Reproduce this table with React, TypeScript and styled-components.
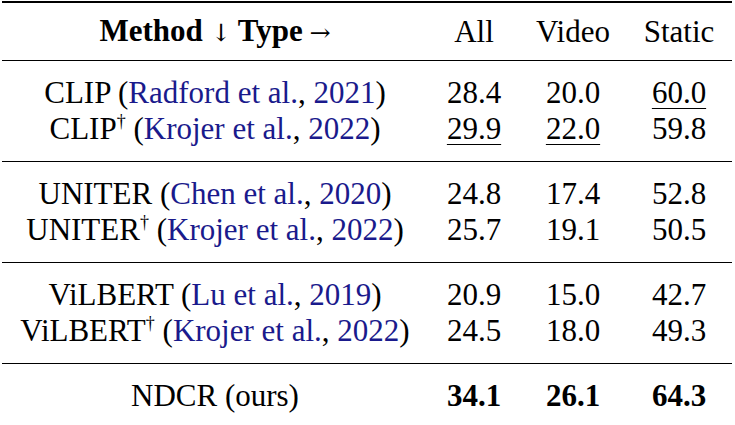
import React from 'react';
import styled, { createGlobalStyle } from 'styled-components';

const GlobalStyle = createGlobalStyle`
  html, body {
    margin: 0;
    padding: 0;
    background: #fff;
  }
`;

const Page = styled.div`
  width: 735px;
  height: 425px;
  padding: 1px 3px 0 2px;
  box-sizing: border-box;
`;

const Table = styled.table`
  width: 730px;
  border-collapse: collapse;
  font-family: 'Liberation Serif', 'Times New Roman', serif;
  font-size: 31px;
  color: #000;
  border-top: 2.5px solid #000;
  border-bottom: 2.5px solid #000;
`;

const Head = styled.thead`
  border-bottom: 1.5px solid #000;
`;

const Group = styled.tbody`
  border-top: 1.5px solid #000;

  tr:first-child td {
    padding-top: 14px;
  }
  tr:last-child td {
    padding-bottom: 14px;
  }
`;

const HeadCell = styled.th<{ $bold?: boolean }>`
  font-weight: ${(p) => (p.$bold ? 700 : 400)};
  text-align: center;
  height: 57px;
  padding: 0;
  line-height: 36px;
  white-space: nowrap;
`;

const Arrow = styled.span`
  font-weight: 400;
  font-family: 'DejaVu Serif', 'Liberation Serif', serif;
  font-size: 24px;
  display: inline-block;
  transform: scaleX(1.05);
`;

const Cell = styled.td<{ $bold?: boolean }>`
  font-weight: ${(p) => (p.$bold ? 700 : 400)};
  text-align: center;
  padding: 0;
  line-height: 36px;
  white-space: nowrap;
`;

const Cite = styled.span`
  color: #1a1a8c;
`;

const Dagger = styled.sup`
  font-size: 18px;
  vertical-align: 12px;
  line-height: 0;
`;

const Best2 = styled.span`
  text-decoration: underline;
  text-decoration-thickness: 1px;
  text-underline-offset: 5px;
`;

type Row = {
  name: string;
  dagger?: boolean;
  authors: string;
  year: string;
  scores: [string, string, string];
  second?: number[];
};

const groups: Row[][] = [
  [
    { name: 'CLIP', authors: 'Radford et al.', year: '2021', scores: ['28.4', '20.0', '60.0'], second: [2] },
    { name: 'CLIP', dagger: true, authors: 'Krojer et al.', year: '2022', scores: ['29.9', '22.0', '59.8'], second: [0, 1] },
  ],
  [
    { name: 'UNITER', authors: 'Chen et al.', year: '2020', scores: ['24.8', '17.4', '52.8'] },
    { name: 'UNITER', dagger: true, authors: 'Krojer et al.', year: '2022', scores: ['25.7', '19.1', '50.5'] },
  ],
  [
    { name: 'ViLBERT', authors: 'Lu et al.', year: '2019', scores: ['20.9', '15.0', '42.7'] },
    { name: 'ViLBERT', dagger: true, authors: 'Krojer et al.', year: '2022', scores: ['24.5', '18.0', '49.3'] },
  ],
];

const ours = ['34.1', '26.1', '64.3'];

export default function App() {
  return (
    <>
      <GlobalStyle />
      <Page>
        <Table>
          <colgroup>
            <col style={{ width: 426 }} />
            <col style={{ width: 92 }} />
            <col style={{ width: 106 }} />
            <col style={{ width: 106 }} />
          </colgroup>
          <Head>
            <tr>
              <HeadCell $bold>
                Method <Arrow>↓</Arrow> Type <Arrow>→</Arrow>
              </HeadCell>
              <HeadCell>All</HeadCell>
              <HeadCell>Video</HeadCell>
              <HeadCell>Static</HeadCell>
            </tr>
          </Head>
          {groups.map((rows, gi) => (
            <Group key={gi}>
              {rows.map((r, ri) => (
                <tr key={ri}>
                  <Cell>
                    {r.name}
                    {r.dagger && <Dagger>†</Dagger>} (<Cite>{r.authors}</Cite>, <Cite>{r.year}</Cite>)
                  </Cell>
                  {r.scores.map((s, si) => (
                    <Cell key={si}>{r.second?.includes(si) ? <Best2>{s}</Best2> : s}</Cell>
                  ))}
                </tr>
              ))}
            </Group>
          ))}
          <Group>
            <tr>
              <Cell>NDCR (ours)</Cell>
              {ours.map((s) => (
                <Cell key={s} $bold>
                  {s}
                </Cell>
              ))}
            </tr>
          </Group>
        </Table>
      </Page>
    </>
  );
}
